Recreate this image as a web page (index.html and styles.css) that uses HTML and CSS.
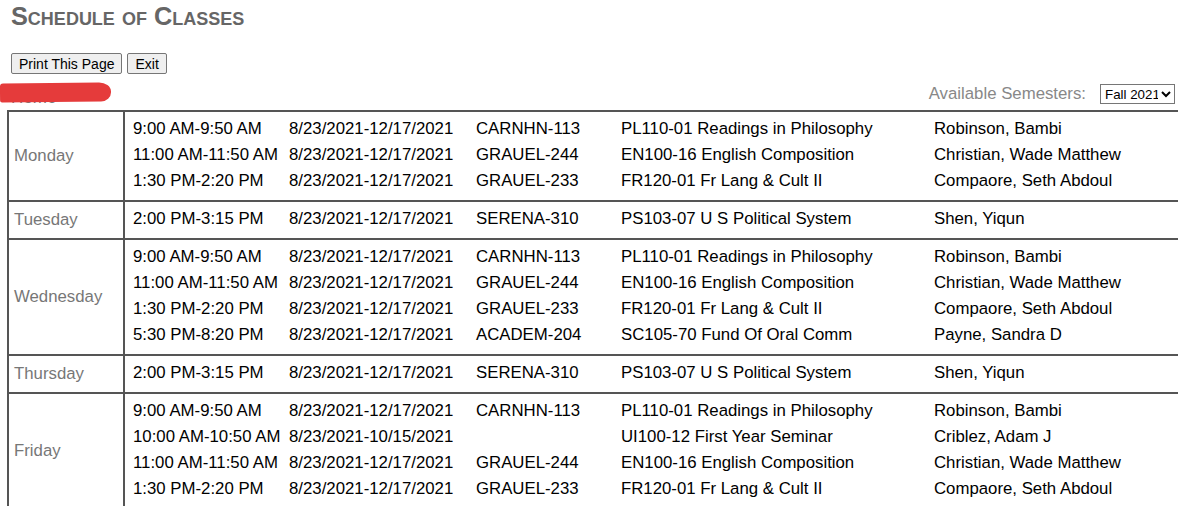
FILE: index.html
```html
<!DOCTYPE html>
<html>
<head>
<meta charset="utf-8">
<link rel="stylesheet" href="styles.css">
</head>
<body>
<div class="page">
  <h1 class="title">Schedule of Classes</h1>
  <div class="buttons">
    <button class="btn">Print This Page</button>
    <button class="btn">Exit</button>
  </div>
  <div class="toolbar">
    <span class="home">Home<span class="scribble"></span></span>
    <span class="sem">Available Semesters:
      <select class="sel"><option>Fall 2021</option></select>
    </span>
  </div>
  <table class="sched">
    <tr>
      <td class="day">Monday</td>
      <td class="classes">
        <div class="cl"><span>9:00 AM-9:50 AM</span><span>8/23/2021-12/17/2021</span><span>CARNHN-113</span><span>PL110-01 Readings in Philosophy</span><span>Robinson, Bambi</span></div>
        <div class="cl"><span>11:00 AM-11:50 AM</span><span>8/23/2021-12/17/2021</span><span>GRAUEL-244</span><span>EN100-16 English Composition</span><span>Christian, Wade Matthew</span></div>
        <div class="cl"><span>1:30 PM-2:20 PM</span><span>8/23/2021-12/17/2021</span><span>GRAUEL-233</span><span>FR120-01 Fr Lang &amp; Cult II</span><span>Compaore, Seth Abdoul</span></div>
      </td>
    </tr>
    <tr>
      <td class="day">Tuesday</td>
      <td class="classes">
        <div class="cl"><span>2:00 PM-3:15 PM</span><span>8/23/2021-12/17/2021</span><span>SERENA-310</span><span>PS103-07 U S Political System</span><span>Shen, Yiqun</span></div>
      </td>
    </tr>
    <tr>
      <td class="day">Wednesday</td>
      <td class="classes">
        <div class="cl"><span>9:00 AM-9:50 AM</span><span>8/23/2021-12/17/2021</span><span>CARNHN-113</span><span>PL110-01 Readings in Philosophy</span><span>Robinson, Bambi</span></div>
        <div class="cl"><span>11:00 AM-11:50 AM</span><span>8/23/2021-12/17/2021</span><span>GRAUEL-244</span><span>EN100-16 English Composition</span><span>Christian, Wade Matthew</span></div>
        <div class="cl"><span>1:30 PM-2:20 PM</span><span>8/23/2021-12/17/2021</span><span>GRAUEL-233</span><span>FR120-01 Fr Lang &amp; Cult II</span><span>Compaore, Seth Abdoul</span></div>
        <div class="cl"><span>5:30 PM-8:20 PM</span><span>8/23/2021-12/17/2021</span><span>ACADEM-204</span><span>SC105-70 Fund Of Oral Comm</span><span>Payne, Sandra D</span></div>
      </td>
    </tr>
    <tr>
      <td class="day">Thursday</td>
      <td class="classes">
        <div class="cl"><span>2:00 PM-3:15 PM</span><span>8/23/2021-12/17/2021</span><span>SERENA-310</span><span>PS103-07 U S Political System</span><span>Shen, Yiqun</span></div>
      </td>
    </tr>
    <tr>
      <td class="day">Friday</td>
      <td class="classes">
        <div class="cl"><span>9:00 AM-9:50 AM</span><span>8/23/2021-12/17/2021</span><span>CARNHN-113</span><span>PL110-01 Readings in Philosophy</span><span>Robinson, Bambi</span></div>
        <div class="cl"><span>10:00 AM-10:50 AM</span><span>8/23/2021-10/15/2021</span><span></span><span>UI100-12 First Year Seminar</span><span>Criblez, Adam J</span></div>
        <div class="cl"><span>11:00 AM-11:50 AM</span><span>8/23/2021-12/17/2021</span><span>GRAUEL-244</span><span>EN100-16 English Composition</span><span>Christian, Wade Matthew</span></div>
        <div class="cl"><span>1:30 PM-2:20 PM</span><span>8/23/2021-12/17/2021</span><span>GRAUEL-233</span><span>FR120-01 Fr Lang &amp; Cult II</span><span>Compaore, Seth Abdoul</span></div>
      </td>
    </tr>
  </table>
</div>
</body>
</html>
```
FILE: styles.css
```css
html, body {
  margin: 0;
  padding: 0;
  overflow: hidden;
  background: #fff;
}
body {
  font-family: "Liberation Sans", Arial, sans-serif;
  color: #000;
}
.page {
  padding: 2px 0 0 0;
}
.title {
  margin: 0 0 0 11px;
  font-size: 25.3px;
  line-height: 28px;
  font-weight: bold;
  font-variant: small-caps;
  color: #666;
}
.buttons {
  margin: 23px 0 0 11px;
  display: flex;
  gap: 5px;
}
.btn {
  font-family: "Liberation Sans", Arial, sans-serif;
  font-size: 14px;
  padding: 1px 7px;
  height: 21px;
  border: 1px solid #767676;
  border-radius: 2px;
  background: #efefef;
  color: #000;
}
.toolbar {
  display: flex;
  justify-content: space-between;
  align-items: flex-end;
  height: 28px;
  margin-top: 8px;
  padding: 0 3px 0 11px;
}
.home {
  position: relative;
  color: #777;
  font-size: 17px;
  line-height: 18px;
  margin-bottom: 3px;
}
.scribble {
  position: absolute;
  left: -11px;
  top: -6px;
  width: 111px;
  height: 19px;
  background: #e53b3b;
  border-radius: 3px 12px 10px 2px / 3px 9px 9px 2px;
  transform: rotate(-0.6deg);
}
.sem {
  color: #888;
  font-size: 16.8px;
  line-height: 22px;
  display: flex;
  align-items: center;
  gap: 14px;
  margin-bottom: 5px;
}
.sel {
  font-family: "Liberation Sans", Arial, sans-serif;
  font-size: 13.33px;
  height: 20px;
  width: 75px;
  border: 1px solid #767676;
  border-radius: 0;
  background: #fff;
  color: #000;
  padding: 0;
}
.sched {
  border-collapse: collapse;
  margin-left: 7px;
  width: 1240px;
  font-size: 16.8px;
}
.sched td {
  border: 2px solid #555;
  vertical-align: middle;
}
.day {
  width: 104px;
  padding: 0 5px;
  color: #777;
}
.classes {
  padding: 4px 0 6px 8px;
}
.cl {
  display: grid;
  grid-template-columns: 156px 187px 145px 313px 1fr;
  height: 26px;
  line-height: 26px;
  white-space: nowrap;
}
```
